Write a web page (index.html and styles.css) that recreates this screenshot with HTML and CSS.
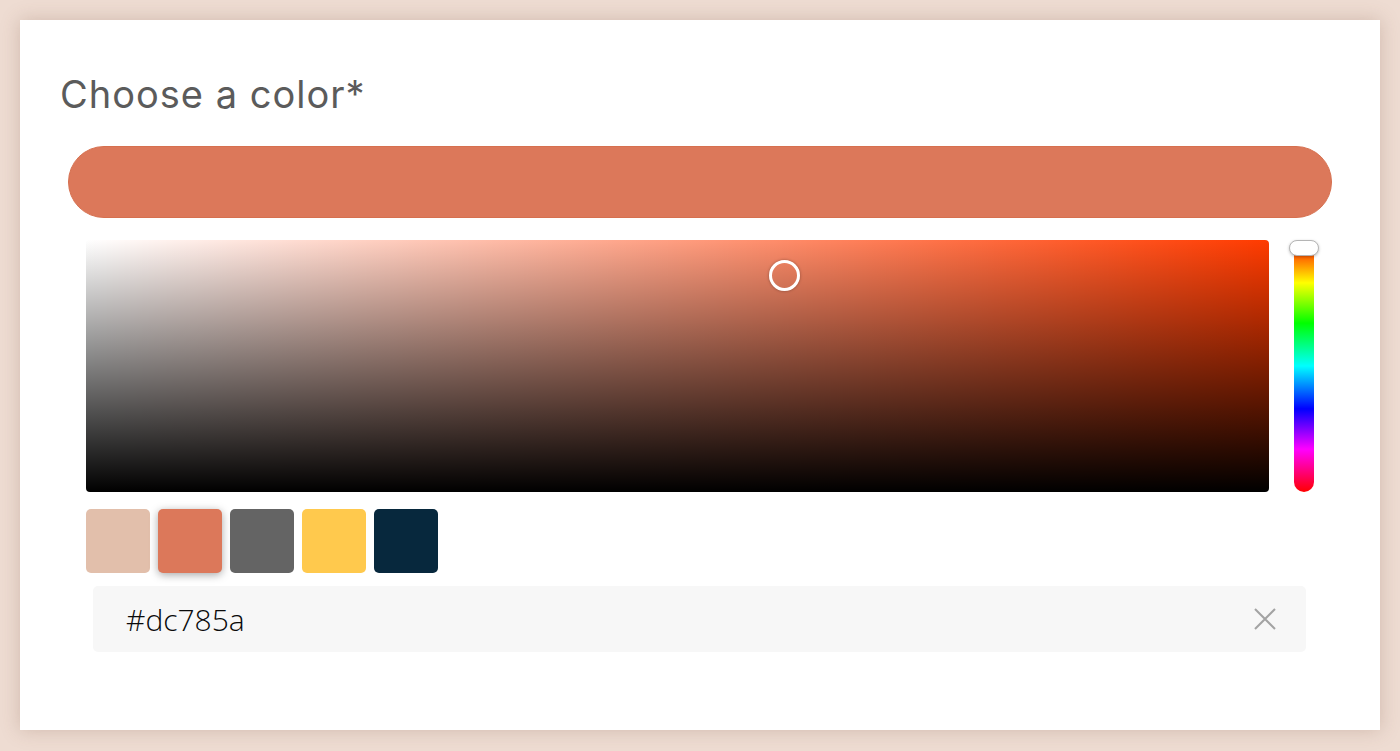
FILE: index.html
```html
<!DOCTYPE html>
<html lang="en">
<head>
    <meta charset="UTF-8">
    <meta name="viewport" content="width=device-width, initial-scale=1.0">
    <title>Choose a color</title>
    <link rel="stylesheet" href="styles.css">
</head>
<body>
    <div class="card">
        <h1 class="label">Choose a color*</h1>

        <div class="picker">
            <!-- Current colour preview -->
            <div class="preview"></div>

            <div class="picker-body">
                <div class="panes">
                    <div class="saturation">
                        <span class="pointer"></span>
                    </div>
                    <div class="hue">
                        <span class="hue-thumb"></span>
                    </div>
                </div>

                <!-- Preset swatches -->
                <div class="swatches">
                    <button class="swatch" style="background: #e2bfab"></button>
                    <button class="swatch selected" style="background: #dc785a"></button>
                    <button class="swatch" style="background: #646464"></button>
                    <button class="swatch" style="background: #ffc94d"></button>
                    <button class="swatch" style="background: #07283d"></button>
                </div>
            </div>

            <div class="hex-field">
                <input type="text" value="#dc785a" class="hex-input">
                <button class="clear" aria-label="Clear">
                    <svg width="22" height="22" viewBox="0 0 22 22" fill="none" stroke="#a3a3a3" stroke-width="2">
                        <path d="M1 1 L21 21 M21 1 L1 21"/>
                    </svg>
                </button>
            </div>
        </div>
    </div>
</body>
</html>
```

FILE: styles.css
```css
*, *::before, *::after {
    box-sizing: border-box;
}

body {
    margin: 0;
    padding: 20px;
    background: #eedcd2;
    font-family: 'Inter', 'Liberation Sans', sans-serif;
    height: 100vh;
}

.card {
    background: #fff;
    height: 710px;
    padding: 51px 48px 0 40px;
    box-shadow: 0 0 18px rgba(120, 80, 60, 0.25);
}

.label {
    margin: 0 0 29px;
    font-size: 38px;
    line-height: 46px;
    font-weight: 400;
    letter-spacing: 1px;
    color: #5b5b5b;
}

.picker {
    margin-left: 8px;
}

.preview {
    height: 72px;
    border-radius: 36px;
    background: #dc785a;
    border: 1px solid #d6704f;
}

.picker-body {
    padding: 22px 18px 0;
}

.panes {
    display: flex;
    gap: 25px;
    height: 252px;
}

.saturation {
    flex: 1;
    position: relative;
    border-radius: 4px;
    background:
        linear-gradient(to top, #000, rgba(0, 0, 0, 0)),
        linear-gradient(to right, #fff, rgba(255, 255, 255, 0)),
        #ff3b00;
}

.pointer {
    position: absolute;
    left: 683px;
    top: 20px;
    width: 31px;
    height: 31px;
    border-radius: 50%;
    border: 3px solid #fff;
    box-shadow: 0 0 3px rgba(0, 0, 0, 0.35);
}

.hue {
    width: 20px;
    position: relative;
    border-radius: 10px;
    background: linear-gradient(to bottom,
        #ff0000 0%, #ffff00 17%, #00ff00 33%, #00ffff 50%,
        #0000ff 67%, #ff00ff 83%, #ff0000 100%);
}

.hue-thumb {
    position: absolute;
    left: -5px;
    top: 0;
    width: 30px;
    height: 16px;
    border-radius: 8px;
    background: #fff;
    border: 1px solid #b5b5b5;
    box-shadow: 0 1px 3px rgba(0, 0, 0, 0.25);
}

.swatches {
    display: flex;
    gap: 8px;
    margin-top: 17px;
}

.swatch {
    width: 64px;
    height: 64px;
    border: none;
    border-radius: 5px;
    padding: 0;
    cursor: pointer;
}

.swatch.selected {
    box-shadow: 0 2px 8px rgba(0, 0, 0, 0.35);
}

.hex-field {
    display: flex;
    align-items: center;
    margin: 13px 26px 0 25px;
    height: 66px;
    background: #f7f7f7;
    border-radius: 5px;
    padding: 0 30px 0 33px;
}

.hex-input {
    flex: 1;
    border: none;
    background: transparent;
    outline: none;
    font-family: 'Open Sans', 'Liberation Sans', sans-serif;
    font-size: 30px;
    font-weight: 300;
    color: #0a0a0a;
    padding: 0;
}

.clear {
    border: none;
    background: none;
    padding: 0;
    width: 22px;
    height: 22px;
    display: flex;
    cursor: pointer;
}
```
